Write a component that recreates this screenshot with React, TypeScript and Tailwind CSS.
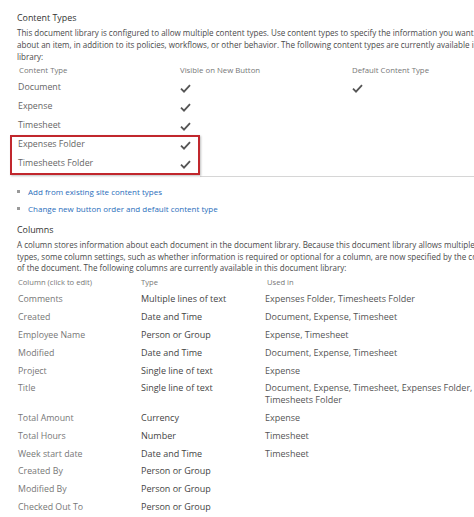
import React from "react";

const Check = () => (
  <svg width="11" height="9" viewBox="0 0 11 9" className="block">
    <path d="M1 4.6 L4 7.6 L10 1.2" fill="none" stroke="#555" strokeWidth="1.8" />
  </svg>
);

const ctRows = [
  { name: "Document", visible: true, def: true },
  { name: "Expense", visible: true, def: false },
  { name: "Timesheet", visible: true, def: false },
  { name: "Expenses Folder", visible: true, def: false },
  { name: "Timesheets Folder", visible: true, def: false },
];

const colRows: [string, string, string][] = [
  ["Comments", "Multiple lines of text", "Expenses Folder, Timesheets Folder"],
  ["Created", "Date and Time", "Document, Expense, Timesheet"],
  ["Employee Name", "Person or Group", "Expense, Timesheet"],
  ["Modified", "Date and Time", "Document, Expense, Timesheet"],
  ["Project", "Single line of text", "Expense"],
  ["Title", "Single line of text", "Document, Expense, Timesheet, Expenses Folder, Timesheets Folder"],
  ["Total Amount", "Currency", "Expense"],
  ["Total Hours", "Number", "Timesheet"],
  ["Week start date", "Date and Time", "Timesheet"],
  ["Created By", "Person or Group", ""],
  ["Modified By", "Person or Group", ""],
  ["Checked Out To", "Person or Group", ""],
];

function CTRow({ name, visible, def }: { name: string; visible: boolean; def: boolean }) {
  return (
    <div className="flex h-[19px] items-center">
      <div className="w-[161px] pl-[1px] text-[8.8px] text-[#666]">{name}</div>
      <div className="w-[172px] pl-[2px]">{visible && <Check />}</div>
      <div className="pl-[2px]">{def && <Check />}</div>
    </div>
  );
}

export default function App() {
  return (
    <div
      className="w-[474px] h-[517px] overflow-hidden bg-white"
      style={{ fontFamily: '"Open Sans", "Noto Sans", sans-serif' }}
    >
      <div className="pl-[17px] pt-[11px]">
        <div className="text-[8.9px] leading-[14px] text-[#333]">Content Types</div>
        <div className="mt-[2px] text-[8.05px] leading-[12px] text-[#4a4a4a] whitespace-nowrap">
          <div>This document library is configured to allow multiple content types. Use content types to specify the information you want to display</div>
          <div>about an item, in addition to its policies, workflows, or other behavior. The following content types are currently available in this document</div>
          <div>library:</div>
        </div>
        <div className="mt-[2px] flex h-[12px] items-center text-[7.8px] text-[#777]">
          <div className="w-[161px] pl-[2px]">Content Type</div>
          <div className="w-[172px] pl-[2px]">Visible on New Button</div>
          <div className="pl-[2px]">Default Content Type</div>
        </div>
        <div className="relative mt-[1.5px]">
          {ctRows.map((r) => (
            <CTRow key={r.name} {...r} />
          ))}
          <div className="pointer-events-none absolute left-[-7px] top-[56px] h-[40px] w-[190px] border-2 border-[#c1272d] shadow-[1px_1px_2px_rgba(0,0,0,0.25)]" />
        </div>
        <div className="ml-[183px] mt-[2.5px] h-[1px] bg-[#d6d6d6]" />
        <div className="mt-[6px] text-[8px] leading-[17px] text-[#2a6ebb]">
          <div className="flex items-center">
            <span className="mr-[8px] inline-block h-[3px] w-[3px] bg-[#9a9a9a]" />
            Add from existing site content types
          </div>
          <div className="flex items-center">
            <span className="mr-[8px] inline-block h-[3px] w-[3px] bg-[#9a9a9a]" />
            Change new button order and default content type
          </div>
        </div>

        <div className="mt-[6px] text-[8.9px] leading-[14px] text-[#333]">Columns</div>
        <div className="mt-[2px] text-[8.05px] leading-[11.5px] text-[#4a4a4a] whitespace-nowrap">
          <div>A column stores information about each document in the document library. Because this document library allows multiple content</div>
          <div>types, some column settings, such as whether information is required or optional for a column, are now specified by the content type</div>
          <div>of the document. The following columns are currently available in this document library:</div>
        </div>
        <div className="mt-[2px] flex h-[14px] items-center text-[7.6px] text-[#777]">
          <div className="w-[124px] pl-[1px]">Column (click to edit)</div>
          <div className="w-[124px]">Type</div>
          <div className="pl-[2px]">Used in</div>
        </div>
        <div className="mt-[1px]">
          {colRows.map(([n, t, u]) => (
            <div key={n} className="flex py-[2.9px] text-[9px] leading-[12px]">
              <div className="w-[124px] shrink-0 pl-[1px] text-[8.8px] text-[#777]">{n}</div>
              <div className="w-[124px] shrink-0 text-[#444]">{t}</div>
              <div className="w-[212px] shrink-0 text-[#555]">{u}</div>
            </div>
          ))}
        </div>
      </div>
    </div>
  );
}
